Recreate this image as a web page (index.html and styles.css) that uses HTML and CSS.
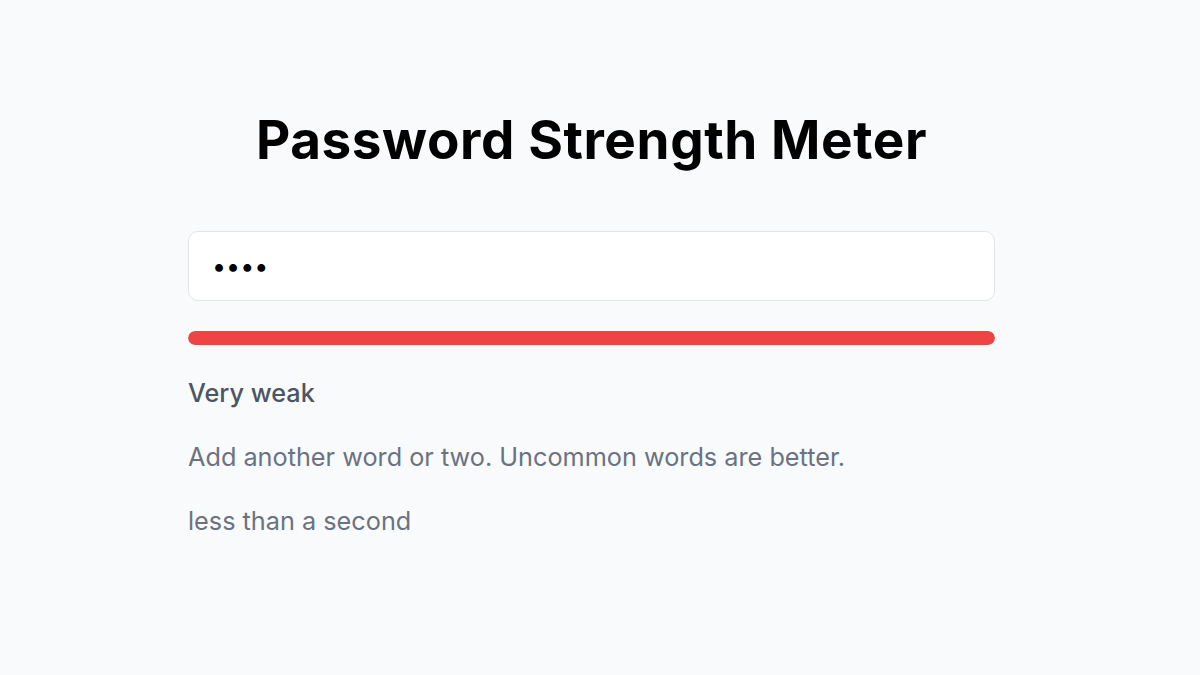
FILE: index.html
```html
<!DOCTYPE html>
<html lang="en">
<head>
    <meta charset="UTF-8">
    <meta name="viewport" content="width=device-width, initial-scale=1.0">
    <title>Password Strength Meter</title>
    <link rel="stylesheet" href="styles.css">
</head>
<body>
    <div class="meter-container">
        <h1>Password Strength Meter</h1>
        <input type="password" class="password-input" value="abcd">
        <div class="strength-bar">
            <div class="strength-fill" style="width: 100%"></div>
        </div>
        <p class="strength-label">Very weak</p>
        <p class="feedback">Add another word or two. Uncommon words are better.</p>
        <p class="feedback">less than a second</p>
    </div>
</body>
</html>
```

FILE: styles.css
```css
body {
    margin: 0;
    padding: 0 17px 0 0;
    font-family: 'Inter', 'Noto Sans', sans-serif;
    background-color: #f9fafb;
    color: #111;
}
.meter-container {
    width: 807px;
    margin: 0 auto;
    padding-top: 108px;
}
h1 {
    margin: 0 0 59px;
    font-size: 53px;
    line-height: 64px;
    font-weight: 700;
    letter-spacing: 0.6px;
    color: #000;
    text-align: center;
}
.password-input {
    display: block;
    box-sizing: border-box;
    width: 100%;
    height: 70px;
    padding: 0 23px;
    border: 1px solid #e2e4e8;
    border-radius: 10px;
    background: #fff;
    font-family: 'Inter', sans-serif;
    font-size: 25px;
    color: #000;
    outline: none;
}
.strength-bar {
    margin-top: 30px;
    height: 14px;
    border-radius: 7px;
    background: #e5e7eb;
    overflow: hidden;
}
.strength-fill {
    height: 100%;
    background: #ef4444;
    border-radius: 7px;
}
p {
    margin: 32px 0 0;
    font-size: 25.25px;
    line-height: 32px;
}
.strength-label {
    font-weight: 500;
    color: #4b5563;
}
.feedback {
    color: #6b7280;
}
```
